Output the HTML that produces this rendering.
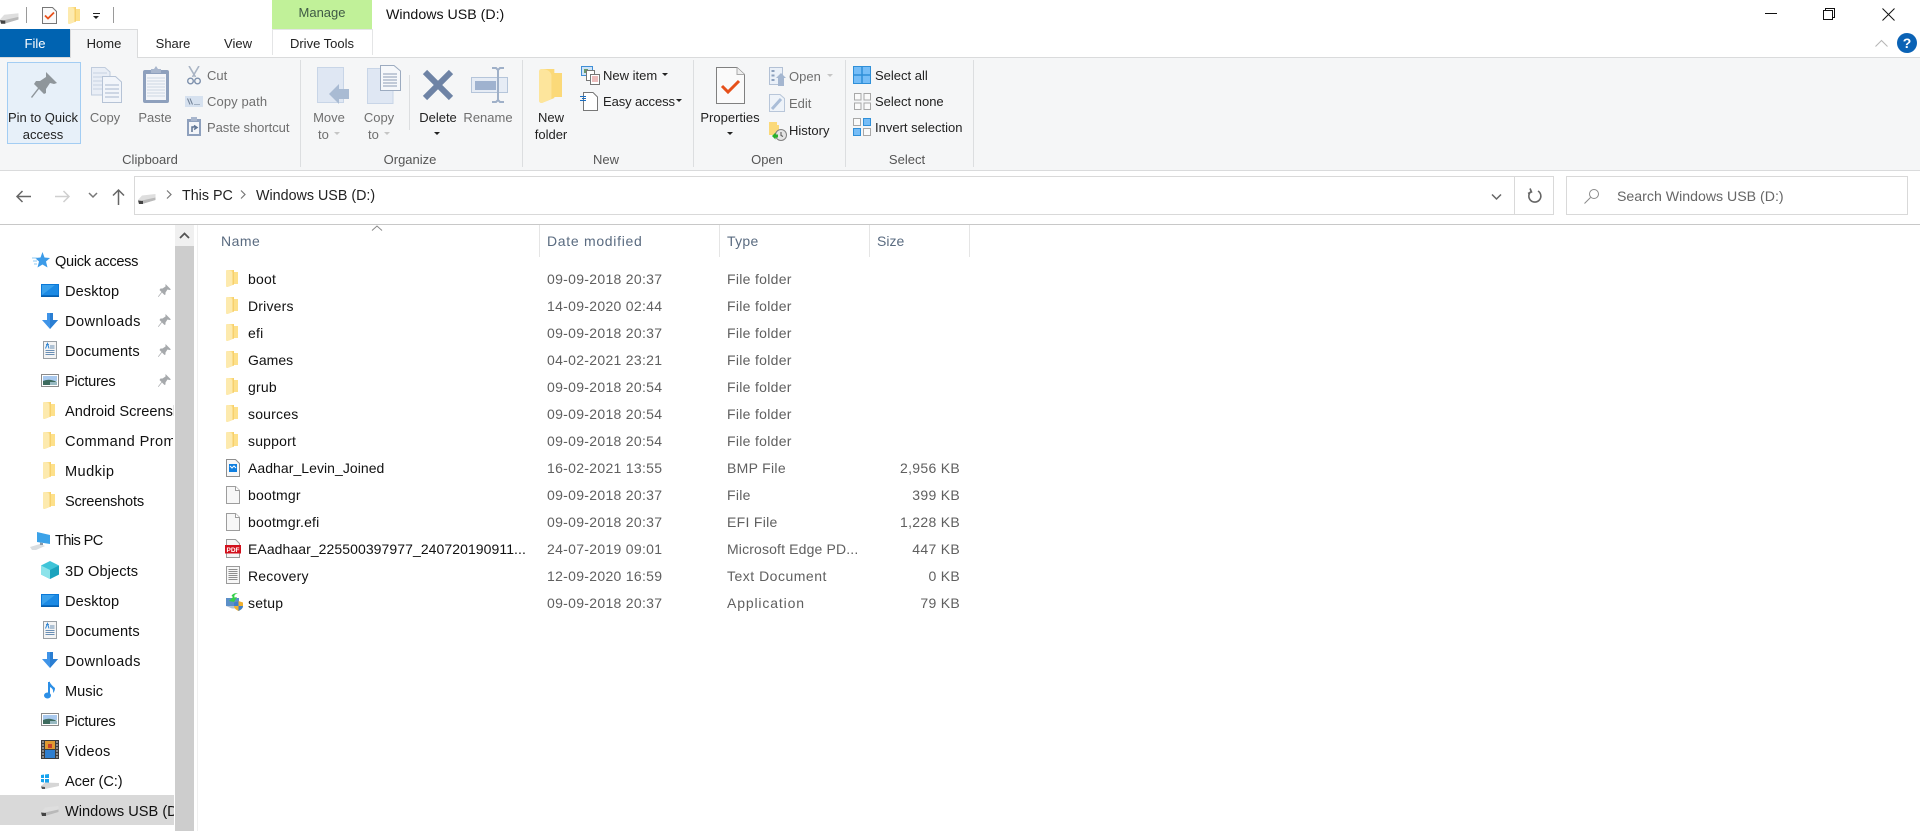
<!DOCTYPE html>
<html><head><meta charset="utf-8"><title>Windows USB (D:)</title>
<style>
html,body{margin:0;padding:0;background:#fff;}
#p{position:relative;width:1920px;height:831px;overflow:hidden;background:#fff;font-family:"Liberation Sans",sans-serif;color:#111;}
#p div,#p span,#p svg{position:absolute;}
.t{white-space:nowrap;line-height:20px;height:20px;}
.r{font-size:13px;color:#222;}
.g{font-size:13px;color:#6f6f6f;}
.c{transform:translateX(-50%);}
.l{font-size:13px;color:#555;}
.n{font-size:14.6px;color:#111;}
.f{font-size:14px;color:#111;}
.d{font-size:14px;letter-spacing:.3px;color:#5f5f5f;}
.s{transform:translateX(-100%);}
.h{font-size:14px;color:#5a6b80;}
.sep{width:1px;background:#dcdee0;}
</style></head><body><div id="p">
<svg width="0" height="0" style="left:0;top:0">
<defs>
<symbol id="folder" viewBox="0 0 12 17"><path d="M0 1.500Q0 0 1.500 0H8V2H12V14H8V14.500L1.500 17Q0 17 0 15.500Z" fill="#fde08a"/><path d="M0 1.500Q0 0 1.500 0C4 0 6 1 6.500 3V15L1.500 17Q0 17 0 15.500Z" fill="#fdeaae"/><path d="M6.500 0H8V14.500L6.500 15Z" fill="#f7d06c"/></symbol>
<symbol id="drive" viewBox="0 0 18 10"><path d="M0 6L4 1.500 17.500 0V6L4 10H1Z" fill="#dedede"/><path d="M4 6.500L17.500 3.500V6L4 10Z" fill="#b9b9b9"/><path d="M0 6.500L5 7V10H1Z" fill="#444"/></symbol>
<symbol id="pin" viewBox="0 0 13 13"><path d="M7.500 0L13 5.500 11.500 6 9.500 5.500 7.500 8.500V10.500L6.500 11 4 8.500 .5 13 0 12.500 3.500 8 1.500 6 2.500 4.500H4.500L7.500 2.500Z" fill="#a6a9ac"/></symbol>
<symbol id="doc" viewBox="0 0 14 18"><path d="M.5.5H9.500L13.500 4.500V17.500H.5Z" fill="#f7f7f7" stroke="#9d9d9d"/><path d="M9.500.5V4.500H13.500" fill="#fff" stroke="#9d9d9d"/></symbol>
<symbol id="desk" viewBox="0 0 18 13"><rect width="18" height="13" fill="#0b79d8"/><rect x="1" y="1" width="16" height="10" fill="#3aa1ec"/><path d="M1 11L14 1H17V11Z" fill="#1c8ae4"/><rect y="11.500" width="18" height="1.500" fill="#075fae"/></symbol>
<symbol id="dl" viewBox="0 0 16 16"><path d="M5 0H11V7H16L8 16 0 7H5Z" fill="#3f94e8"/><path d="M8 0H11V7H16L8 16Z" fill="#2a7ed2"/></symbol>
<symbol id="docs" viewBox="0 0 14 18"><path d="M.5.5H13.500V17.500H.5Z" fill="#f4f4f4" stroke="#9aa0a5"/><path d="M3 3.500H6M7 5H11.500M7 7H11.500M2.500 9.500H11.500M2.500 11.500H11.500M2.500 13.500H11.500" stroke="#6a8fb5" fill="none"/><path d="M2.500 7.500L4.500 2.500 6 7.500" stroke="#2a86d8" fill="none"/></symbol>
<symbol id="pics" viewBox="0 0 18 13"><rect x=".5" y=".5" width="17" height="12" fill="#fff" stroke="#8a8a8a"/><rect x="2" y="2" width="14" height="5" fill="#a9c9ee"/><path d="M2 7Q8 4 16 8V11H2Z" fill="#3d6b5e"/><rect x="9" y="8" width="7" height="3" fill="#98b9c2"/></symbol>
</defs></svg>

<!-- title bar -->
<svg style="left:0;top:13px" width="19" height="11"><use href="#drive"/></svg>
<div style="left:26px;top:7px;width:1px;height:16px;background:#9a9a9a"></div>
<svg style="left:42px;top:7px" width="15" height="17" viewBox="0 0 15 17"><path d="M.5.5H10.500L14.500 4.500V16.500H.5Z" fill="#fafafa" stroke="#777"/><path d="M3 8.500L6 11.500 12 5.500" fill="none" stroke="#e8501a" stroke-width="1.800"/></svg>
<svg style="left:68px;top:7px" width="12" height="17"><use href="#folder"/></svg>
<div style="left:93px;top:13px;width:7px;height:1px;background:#222"></div>
<div style="left:93px;top:16px;width:0;height:0;border-left:3.500px solid transparent;border-right:3.500px solid transparent;border-top:3px solid #222"></div>
<div style="left:113px;top:7px;width:1px;height:16px;background:#9a9a9a"></div>
<div style="left:272px;top:0;width:100px;height:29px;background:#c1f199"></div>
<span class="t r c" style="left:322px;top:3px;color:#3f5a45">Manage</span>
<span class="t" style="left:386px;top:5px;font-size:14.2px;color:#111">Windows USB (D:)</span>
<div style="left:1765px;top:13px;width:12px;height:1px;background:#111"></div>
<svg style="left:1823px;top:8px" width="12" height="12"><path d="M.5 2.500H9.500V11.500H.5ZM2.500 2.500V.5H11.500V9.500H9.500" fill="none" stroke="#111"/></svg>
<svg style="left:1882px;top:8px" width="13" height="13"><path d="M.5.5L12.500 12.500M12.500.5L.5 12.500" stroke="#111" fill="none"/></svg>

<!-- tabs -->
<div style="left:0;top:29px;width:70px;height:28px;background:#0063b1"></div>
<span class="t r c" style="left:35px;top:34px;color:#fff">File</span>
<div style="left:70px;top:29px;width:68px;height:29px;background:#f5f6f7;border:1px solid #dadbdc;border-bottom:0;box-sizing:border-box"></div>
<span class="t r c" style="left:104px;top:34px">Home</span>
<span class="t r c" style="left:173px;top:34px">Share</span>
<span class="t r c" style="left:238px;top:34px">View</span>
<div style="left:272px;top:29px;width:101px;height:26px;border:1px solid #e4e5e6;border-bottom:0;box-sizing:border-box"></div>
<span class="t r c" style="left:322px;top:34px">Drive Tools</span>
<svg style="left:1875px;top:39px" width="13" height="8"><path d="M.5 7.500L6.500 1.500 12.500 7.500" fill="none" stroke="#b5b5b5"/></svg>
<div style="left:1897px;top:33px;width:20px;height:20px;border-radius:50%;background:#0a62b5"></div>
<span class="t c" style="left:1907px;top:33px;color:#fff;font-size:14px;font-weight:bold">?</span>

<!-- ribbon -->
<div style="left:0;top:57px;width:1920px;height:114px;background:#f5f6f7;border-top:1px solid #dadbdc;border-bottom:1px solid #dadbdc;box-sizing:border-box"></div>
<div style="left:71px;top:56px;width:66px;height:3px;background:#f5f6f7"></div>
<div class="sep" style="left:300px;top:60px;height:107px"></div>
<div class="sep" style="left:409px;top:75px;height:55px"></div>
<div class="sep" style="left:522px;top:60px;height:107px"></div>
<div class="sep" style="left:693px;top:60px;height:107px"></div>
<div class="sep" style="left:845px;top:60px;height:107px"></div>
<div class="sep" style="left:973px;top:60px;height:107px"></div>

<div style="left:7px;top:62px;width:74px;height:82px;background:#e7f0f9;border:1px solid #a3cdf3;box-sizing:border-box"></div>
<svg style="left:31px;top:72px" width="26" height="26" viewBox="0 0 13 13"><path d="M7.500 0L13 5.500 11.500 6 9.500 5.500 7.500 8.500V10.500L6.500 11 4 8.500 .5 13 0 12.500 3.500 8 1.500 6 2.500 4.500H4.500L7.500 2.500Z" fill="#8f969b"/></svg>
<span class="t r c" style="left:43px;top:108px">Pin to Quick</span>
<span class="t r c" style="left:43px;top:125px">access</span>

<svg style="left:91px;top:67px" width="31" height="36" viewBox="0 0 31 36"><path d="M.5.5H14L19 5V28H.5Z" fill="#e9eef6" stroke="#c0ccdd"/><path d="M2 6H16M2 10H16M2 14H16M2 18H16M2 22H16" stroke="#c6d2e3"/><path d="M11.500 9.500H24.500L30.500 15V35.500H11.500Z" fill="#f2f5fa" stroke="#b6c3d6"/><path d="M14 18H28M14 22H28M14 26H28M14 30H28" stroke="#a8b8ce"/></svg>
<span class="t g c" style="left:105px;top:108px">Copy</span>
<svg style="left:143px;top:66px" width="27" height="37" viewBox="0 0 27 37"><rect x="0" y="4" width="26" height="33" rx="2" fill="#8ea0bd"/><rect x="3" y="8" width="20" height="26" fill="#f3f5f9"/><path d="M4 12H22M4 15H22M4 18H22M4 21H22M4 24H22M4 27H22M4 30H22" stroke="#cdd6e4"/><path d="M8 7V3H11L13 0 15 3H18V7Z" fill="#a8b6cd"/></svg>
<span class="t g c" style="left:155px;top:108px">Paste</span>
<svg style="left:187px;top:66px" width="14" height="19" viewBox="0 0 14 19"><path d="M2 0L8.500 11M12 0L5.500 11" stroke="#a9b4c4" stroke-width="1.600" fill="none"/><circle cx="3.500" cy="15" r="2.800" fill="none" stroke="#7e91ad" stroke-width="1.400"/><circle cx="10.500" cy="15" r="2.800" fill="none" stroke="#7e91ad" stroke-width="1.400"/></svg>
<span class="t g" style="left:207px;top:66px">Cut</span>
<svg style="left:185px;top:96px" width="18" height="11" viewBox="0 0 18 11"><rect width="18" height="11" fill="#d6e1ef"/><path d="M2.500 2.500L5 8.500M5 2.500L7.500 8.500" stroke="#6f7f95" fill="none"/><path d="M9.500 8.500H15.500" stroke="#6f7f95" stroke-dasharray="1 1"/></svg>
<span class="t g" style="left:207px;top:92px;letter-spacing:.1px">Copy path</span>
<svg style="left:187px;top:117px" width="14" height="19" viewBox="0 0 14 19"><rect y="2" width="14" height="17" fill="#8ea0bd"/><rect x="2" y="5" width="10" height="12" fill="#f3f5f9"/><path d="M4 0H10V4H4Z" fill="#a8b6cd"/><path d="M5 15V10H9M7 8.500L10 10.500 7 12.500" stroke="#5d7393" fill="none" stroke-width="1.500"/></svg>
<span class="t g" style="left:207px;top:118px;letter-spacing:-.05px">Paste shortcut</span>
<span class="t l c" style="left:150px;top:150px">Clipboard</span>

<svg style="left:317px;top:67px" width="33" height="37" viewBox="0 0 33 37"><rect x=".5" y=".5" width="26" height="35" fill="#dfe7f3" stroke="#c8d5e7"/><path d="M12 27L22 17V22H32V32H22V37Z" fill="#a9bbd3"/></svg>
<span class="t g c" style="left:329px;top:108px">Move</span>
<span class="t g" style="left:318px;top:125px">to</span>
<div style="left:334px;top:132px;width:0;height:0;border-left:3.500px solid transparent;border-right:3.500px solid transparent;border-top:3.500px solid #c5c5c5"></div>
<svg style="left:367px;top:65px" width="34" height="39" viewBox="0 0 34 39"><path d="M.5 3.500H26V38.500H.5Z" fill="#dfe7f3" stroke="#c8d5e7"/><path d="M13.500.5H27L33.500 6V25.500H13.500Z" fill="#f6f8fb" stroke="#9cabc0"/><path d="M16 9H30M16 12H30M16 15H30M16 18H30M16 21H30" stroke="#8c9db5"/></svg>
<span class="t g c" style="left:379px;top:108px">Copy</span>
<span class="t g" style="left:368px;top:125px">to</span>
<div style="left:384px;top:132px;width:0;height:0;border-left:3.500px solid transparent;border-right:3.500px solid transparent;border-top:3.500px solid #c5c5c5"></div>
<svg style="left:422px;top:69px" width="32" height="32" viewBox="0 0 32 32"><path d="M3 3L29 29M29 3L3 29" stroke="#6e83a5" stroke-width="6" fill="none"/></svg>
<span class="t r c" style="left:438px;top:108px">Delete</span>
<div style="left:434px;top:132px;width:0;height:0;border-left:3.500px solid transparent;border-right:3.500px solid transparent;border-top:3.500px solid #222"></div>
<svg style="left:471px;top:67px" width="37" height="37" viewBox="0 0 37 37"><rect x=".5" y="10.500" width="36" height="15" fill="#e6ecf5" stroke="#b5c5da"/><rect x="4" y="14" width="21" height="9" fill="#9fb2cf"/><path d="M21 1H25L27 3 29 1H33M27 3V33M21 35H25L27 33 29 35H33" stroke="#9fb0c8" stroke-width="2" fill="none"/></svg>
<span class="t g c" style="left:488px;top:108px">Rename</span>
<span class="t l c" style="left:410px;top:150px">Organize</span>

<svg style="left:539px;top:69px" width="23" height="34" viewBox="0 0 12 17" preserveAspectRatio="none"><path d="M0 1.500Q0 0 1.500 0H8V2H12V14H8V14.500L1.500 17Q0 17 0 15.500Z" fill="#fbd979"/><path d="M0 1.500Q0 0 1.500 0C4 0 6 1 6.500 3V15L1.500 17Q0 17 0 15.500Z" fill="#fde59c"/></svg>
<span class="t r c" style="left:551px;top:108px">New</span>
<span class="t r c" style="left:551px;top:125px">folder</span>
<svg style="left:581px;top:66px" width="19" height="19" viewBox="0 0 19 19"><rect x=".5" y=".5" width="11" height="9" fill="#cfe4f7" stroke="#3f8ed6"/><rect x="3" y="3" width="4" height="4" fill="#6a9a6a"/><rect x="5.500" y="4.500" width="8" height="10" fill="#fff" stroke="#777"/><rect x="9.500" y="8.500" width="9" height="10" fill="#fff" stroke="#777"/><path d="M11 11H17M11 13H17M11 15H17" stroke="#d97a7a"/></svg>
<span class="t r" style="left:603px;top:66px">New item</span>
<div style="left:662px;top:73px;width:0;height:0;border-left:3.500px solid transparent;border-right:3.500px solid transparent;border-top:3.500px solid #222"></div>
<svg style="left:580px;top:92px" width="18" height="19" viewBox="0 0 18 19"><path d="M3.500.5H13L17.500 5V18.500H3.500Z" fill="#fff" stroke="#777"/><path d="M0 4.500H6M2 6.500H6M0 8.500H6" stroke="#1b6ec2"/></svg>
<span class="t r" style="left:603px;top:92px;letter-spacing:-.1px">Easy access</span>
<div style="left:676px;top:99px;width:0;height:0;border-left:3.500px solid transparent;border-right:3.500px solid transparent;border-top:3.500px solid #222"></div>
<span class="t l c" style="left:606px;top:150px">New</span>

<svg style="left:716px;top:67px" width="29" height="37" viewBox="0 0 29 37"><path d="M.5.5H21L28.500 7.500V36.500H.5Z" fill="#fafafa" stroke="#808080"/><path d="M21 .5V7.500H28.500" fill="#eee" stroke="#aaa"/><path d="M6 19L12 25 23 14" fill="none" stroke="#e6501a" stroke-width="3"/></svg>
<span class="t r c" style="left:730px;top:108px">Properties</span>
<div style="left:727px;top:132px;width:0;height:0;border-left:3.500px solid transparent;border-right:3.500px solid transparent;border-top:3.500px solid #222"></div>
<svg style="left:769px;top:67px" width="18" height="19" viewBox="0 0 18 19"><rect x=".5" y=".5" width="13" height="17" fill="#eaf0f8" stroke="#b3c1d5"/><path d="M2.500 3h3v2h-3zM2.500 7.500h3v2h-3zM2.500 12h3v2h-3z" fill="#8ca0bd"/><path d="M7 11L12 6 17 11H15V19H9V11Z" fill="#a4b6d0"/></svg>
<span class="t g" style="left:789px;top:67px">Open</span>
<div style="left:827px;top:74px;width:0;height:0;border-left:3.500px solid transparent;border-right:3.500px solid transparent;border-top:3.500px solid #c5c5c5"></div>
<svg style="left:769px;top:94px" width="16" height="18" viewBox="0 0 16 18"><path d="M.5.5H11L15.500 4.500V17.500H.5Z" fill="#eef3f9" stroke="#b8c6d9"/><path d="M3 15L12 5" stroke="#a9bdd8" stroke-width="3"/></svg>
<span class="t g" style="left:789px;top:94px">Edit</span>
<svg style="left:769px;top:121px" width="18" height="20" viewBox="0 0 18 20"><path d="M0 1H8V4H10V14H0Z" fill="#fbd979"/><circle cx="12" cy="14" r="5.500" fill="#e4e4e4" stroke="#808080"/><path d="M12 11V14.500L14 15.500" stroke="#555" fill="none"/><path d="M3 15L6.500 11.500V13.500H9V16.500H6.500V18.500Z" fill="#26b02b"/></svg>
<span class="t r" style="left:789px;top:121px">History</span>
<span class="t l c" style="left:767px;top:150px">Open</span>

<svg style="left:853px;top:66px" width="18" height="18" viewBox="0 0 18 18"><rect x=".5" y=".5" width="17" height="17" fill="#76bdf7" stroke="#2f8fd8"/><path d="M9 0V18M0 9H18" stroke="#2f8fd8" stroke-width="1.500"/></svg>
<span class="t r" style="left:875px;top:66px">Select all</span>
<svg style="left:854px;top:93px" width="17" height="17" viewBox="0 0 17 17"><path d="M.5.5h6.500v6.500H.5zM10 .5h6.500v6.500H10zM.5 10h6.500v6.500H.5zM10 10h6.500v6.500H10z" fill="#fafafa" stroke="#a8a8a8"/></svg>
<span class="t r" style="left:875px;top:92px">Select none</span>
<svg style="left:853px;top:118px" width="18" height="18" viewBox="0 0 18 18"><path d="M.5.5h7v7h-7zM10.500 10.500h7v7h-7z" fill="#fafafa" stroke="#a8a8a8"/><path d="M10.500.5h7v7h-7zM.5 10.500h7v7h-7z" fill="#76bdf7" stroke="#2f8fd8"/></svg>
<span class="t r" style="left:875px;top:118px">Invert selection</span>
<span class="t l c" style="left:907px;top:150px">Select</span>

<!-- address -->
<svg style="left:15px;top:189px" width="17" height="15" viewBox="0 0 17 15"><path d="M16 7.500H2M7.500 2L2 7.500 7.500 13" fill="none" stroke="#666" stroke-width="1.500"/></svg>
<svg style="left:54px;top:189px" width="17" height="15" viewBox="0 0 17 15"><path d="M1 7.500H15M9.500 2L15 7.500 9.500 13" fill="none" stroke="#cfcfcf" stroke-width="1.500"/></svg>
<svg style="left:88px;top:192px" width="10" height="7"><path d="M1 1L5 5 9 1" fill="none" stroke="#777" stroke-width="1.500"/></svg>
<svg style="left:111px;top:188px" width="15" height="17" viewBox="0 0 15 17"><path d="M7.500 17V2M2 7.500L7.500 2 13 7.500" fill="none" stroke="#666" stroke-width="1.500"/></svg>
<div style="left:134px;top:176px;width:1420px;height:39px;border:1px solid #d9d9d9;box-sizing:border-box;background:#fff"></div>
<div style="left:1514px;top:176px;width:1px;height:39px;background:#d9d9d9"></div>
<svg style="left:138px;top:194px" width="18" height="10"><use href="#drive"/></svg>
<svg style="left:166px;top:189px" width="7" height="11"><path d="M1 1.500L5 5.500 1 9.500" fill="none" stroke="#777" stroke-width="1.200"/></svg>
<span class="t" style="left:182px;top:186px;font-size:14.300px;color:#222">This PC</span>
<svg style="left:240px;top:189px" width="7" height="11"><path d="M1 1.500L5 5.500 1 9.500" fill="none" stroke="#777" stroke-width="1.200"/></svg>
<span class="t" style="left:256px;top:186px;font-size:14.300px;color:#222">Windows USB (D:)</span>
<svg style="left:1491px;top:193px" width="11" height="8"><path d="M1 1.500L5.500 6 10 1.500" fill="none" stroke="#666" stroke-width="1.500"/></svg>
<svg style="left:1527px;top:188px" width="16" height="16" viewBox="0 0 16 16"><path d="M4 3.500A6 6 0 1 0 11 3M3 .5L4.500 4 1 5.500" fill="none" stroke="#666" stroke-width="1.600"/></svg>
<div style="left:1566px;top:176px;width:342px;height:39px;border:1px solid #d9d9d9;box-sizing:border-box"></div>
<svg style="left:1584px;top:188px" width="16" height="16" viewBox="0 0 16 16"><circle cx="10" cy="6" r="4.500" fill="none" stroke="#8a8a8a"/><path d="M6.500 9.500L.5 15.500" stroke="#8a8a8a"/></svg>
<span class="t" style="left:1617px;top:186px;font-size:14.150px;color:#666">Search Windows USB (D:)</span>
<div style="left:0;top:224px;width:1920px;height:1px;background:#c8c8c8"></div>

<!-- nav pane -->
<div style="left:175px;top:225px;width:19px;height:606px;background:#cdcdcd"></div>
<div style="left:175px;top:225px;width:19px;height:21px;background:#f0f0f0"></div>
<svg style="left:179px;top:232px" width="11" height="7"><path d="M1 6L5.500 1.500 10 6" fill="none" stroke="#555" stroke-width="1.800"/></svg>
<div style="left:197px;top:225px;width:1px;height:606px;background:#f0f0f0"></div>
<div style="left:0;top:795px;width:174px;height:30px;background:#d9d9d9"></div>

<svg style="left:32px;top:252px" width="18" height="17" viewBox="0 0 18 17"><path d="M10.500 0L12.500 5.500 18 6 14 9.500 15.500 15.500 10.500 12.500 5.500 15.500 7 9.500 3 6 8.500 5.500Z" fill="#3c9be8"/><path d="M0 6H5M1 9H5M2 12H5" stroke="#8ccaf3"/></svg>
<span class="t n" style="left:55px;top:252px;letter-spacing:-.3px">Quick access</span>

<svg style="left:41px;top:284px" width="18" height="13"><use href="#desk"/></svg><span class="t n" style="left:65px;top:282px;letter-spacing:.1px">Desktop</span>
<svg style="left:158px;top:284px" width="13" height="13"><use href="#pin"/></svg>
<svg style="left:42px;top:313px" width="16" height="16"><use href="#dl"/></svg><span class="t n" style="left:65px;top:312px;letter-spacing:.4px">Downloads</span>
<svg style="left:158px;top:314px" width="13" height="13"><use href="#pin"/></svg>
<svg style="left:43px;top:341px" width="14" height="18"><use href="#docs"/></svg><span class="t n" style="left:65px;top:342px;letter-spacing:.1px">Documents</span>
<svg style="left:158px;top:344px" width="13" height="13"><use href="#pin"/></svg>
<svg style="left:41px;top:374px" width="18" height="13"><use href="#pics"/></svg><span class="t n" style="left:65px;top:372px;letter-spacing:-.3px">Pictures</span>
<svg style="left:158px;top:374px" width="13" height="13"><use href="#pin"/></svg>
<svg style="left:43px;top:402px" width="12" height="17"><use href="#folder"/></svg>
<div style="left:65px;top:402px;width:109px;height:20px;overflow:hidden"><span class="t n" style="left:0;top:0">Android Screenshots</span></div>
<svg style="left:43px;top:432px" width="12" height="17"><use href="#folder"/></svg>
<div style="left:65px;top:432px;width:108px;height:20px;overflow:hidden"><span class="t n" style="left:0;top:0;letter-spacing:.4px">Command Prompt</span></div>
<svg style="left:43px;top:462px" width="12" height="17"><use href="#folder"/></svg><span class="t n" style="left:65px;top:462px;letter-spacing:.4px">Mudkip</span>
<svg style="left:43px;top:492px" width="12" height="17"><use href="#folder"/></svg><span class="t n" style="left:65px;top:492px;letter-spacing:-.2px">Screenshots</span>

<svg style="left:30px;top:532px" width="21" height="19" viewBox="0 0 21 19"><path d="M7 0L20 3V12L7 10Z" fill="#3ba2e8"/><path d="M0 15L10 12 15 14 6 18H2Z" fill="#d9dde0"/><path d="M10 10.500L13 11V13H10Z" fill="#8a9aa8"/></svg>
<span class="t n" style="left:55px;top:531px;letter-spacing:-.6px">This PC</span>
<svg style="left:41px;top:561px" width="18" height="18" viewBox="0 0 18 18"><path d="M9 0L18 4.500V13.500L9 18 0 13.500V4.500Z" fill="#3fc4d8"/><path d="M0 4.500L9 9V18L0 13.500Z" fill="#8ce3ea"/><path d="M18 4.500L9 9V18L18 13.500Z" fill="#1ba3bd"/></svg>
<span class="t n" style="left:65px;top:562px;letter-spacing:.1px">3D Objects</span>
<svg style="left:41px;top:594px" width="18" height="13"><use href="#desk"/></svg><span class="t n" style="left:65px;top:592px;letter-spacing:.1px">Desktop</span>
<svg style="left:43px;top:621px" width="14" height="18"><use href="#docs"/></svg><span class="t n" style="left:65px;top:622px;letter-spacing:.1px">Documents</span>
<svg style="left:42px;top:652px" width="16" height="16"><use href="#dl"/></svg><span class="t n" style="left:65px;top:652px;letter-spacing:.4px">Downloads</span>
<svg style="left:44px;top:681px" width="12" height="18" viewBox="0 0 12 18"><path d="M5 1V14" stroke="#2c8fe6" stroke-width="2"/><ellipse cx="3.500" cy="14.500" rx="3.500" ry="3" fill="#2c8fe6"/><path d="M5 0Q7 4 11 7 11 10 9 12 10 8 6 6Z" fill="#2c8fe6"/></svg>
<span class="t n" style="left:65px;top:682px">Music</span>
<svg style="left:41px;top:713px" width="18" height="13"><use href="#pics"/></svg><span class="t n" style="left:65px;top:712px;letter-spacing:-.3px">Pictures</span>
<svg style="left:41px;top:740px" width="18" height="19" viewBox="0 0 18 19"><rect width="18" height="19" fill="#3c3c3c"/><path d="M1 2h2M1 5h2M1 8h2M1 11h2M1 14h2M1 17h2M15 2h2M15 5h2M15 8h2M15 11h2M15 14h2M15 17h2" stroke="#ddd"/><rect x="4" y="1" width="10" height="8" fill="#e09a30"/><rect x="4" y="10" width="10" height="8" fill="#2f7fd0"/><rect x="7" y="4" width="4" height="4" fill="#c8402a"/></svg>
<span class="t n" style="left:65px;top:742px;letter-spacing:.2px">Videos</span>
<svg style="left:40px;top:774px" width="20" height="15" viewBox="0 0 20 15"><path d="M1 1L4 .5V4H1ZM5 .5L9 0V4H5ZM1 5H4V8.500L1 8ZM5 5H9V9L5 8.500Z" fill="#17a3ee"/><path d="M1 12L5 8.500 19 9V12L5 15H2Z" fill="#d6d6d6"/><path d="M1 12.500L5 13V15H2Z" fill="#555"/></svg>
<span class="t n" style="left:65px;top:772px;letter-spacing:-.1px">Acer (C:)</span>
<svg style="left:41px;top:806px" width="18" height="10"><use href="#drive"/></svg>
<div style="left:65px;top:802px;width:109px;height:20px;overflow:hidden"><span class="t n" style="left:0;top:0">Windows USB (D:)</span></div>

<!-- header -->
<svg style="left:371px;top:225px" width="12" height="6"><path d="M1 5.500L6 1 11 5.500" fill="none" stroke="#888"/></svg>
<span class="t h" style="left:221px;top:231px;letter-spacing:.5px">Name</span>
<span class="t h" style="left:547px;top:231px;letter-spacing:.7px">Date modified</span>
<span class="t h" style="left:727px;top:231px;letter-spacing:.3px">Type</span>
<span class="t h" style="left:877px;top:231px">Size</span>
<div class="sep" style="left:539px;top:225px;height:32px;background:#e5e5e5"></div>
<div class="sep" style="left:719px;top:225px;height:32px;background:#e5e5e5"></div>
<div class="sep" style="left:869px;top:225px;height:32px;background:#e5e5e5"></div>
<div class="sep" style="left:969px;top:225px;height:32px;background:#e5e5e5"></div>

<!-- files -->
<svg style="left:226px;top:270px" width="12" height="17"><use href="#folder"/></svg><span class="t f" style="left:248px;top:269px;letter-spacing:.2px">boot</span><span class="t d" style="left:547px;top:269px">09-09-2018 20:37</span><span class="t d" style="left:727px;top:269px">File folder</span>
<svg style="left:226px;top:297px" width="12" height="17"><use href="#folder"/></svg><span class="t f" style="left:248px;top:296px;letter-spacing:.2px">Drivers</span><span class="t d" style="left:547px;top:296px">14-09-2020 02:44</span><span class="t d" style="left:727px;top:296px">File folder</span>
<svg style="left:226px;top:324px" width="12" height="17"><use href="#folder"/></svg><span class="t f" style="left:248px;top:323px;letter-spacing:.2px">efi</span><span class="t d" style="left:547px;top:323px">09-09-2018 20:37</span><span class="t d" style="left:727px;top:323px">File folder</span>
<svg style="left:226px;top:351px" width="12" height="17"><use href="#folder"/></svg><span class="t f" style="left:248px;top:350px">Games</span><span class="t d" style="left:547px;top:350px">04-02-2021 23:21</span><span class="t d" style="left:727px;top:350px">File folder</span>
<svg style="left:226px;top:378px" width="12" height="17"><use href="#folder"/></svg><span class="t f" style="left:248px;top:377px;letter-spacing:.2px">grub</span><span class="t d" style="left:547px;top:377px">09-09-2018 20:54</span><span class="t d" style="left:727px;top:377px">File folder</span>
<svg style="left:226px;top:405px" width="12" height="17"><use href="#folder"/></svg><span class="t f" style="left:248px;top:404px;letter-spacing:.2px">sources</span><span class="t d" style="left:547px;top:404px">09-09-2018 20:54</span><span class="t d" style="left:727px;top:404px">File folder</span>
<svg style="left:226px;top:432px" width="12" height="17"><use href="#folder"/></svg><span class="t f" style="left:248px;top:431px;letter-spacing:.2px">support</span><span class="t d" style="left:547px;top:431px">09-09-2018 20:54</span><span class="t d" style="left:727px;top:431px">File folder</span>

<svg style="left:226px;top:459px" width="14" height="18" viewBox="0 0 14 18"><path d="M.5.5H9.500L13.500 4.500V17.500H.5Z" fill="#f7f7f7" stroke="#8e8e8e"/><rect x="3" y="5" width="8" height="8" fill="#0f7fe0"/><path d="M4 7L6 9 8 7 10 9" stroke="#fff" fill="none"/></svg>
<span class="t f" style="left:248px;top:458px;letter-spacing:.05px">Aadhar_Levin_Joined</span><span class="t d" style="left:547px;top:458px">16-02-2021 13:55</span><span class="t d" style="left:727px;top:458px">BMP File</span><span class="t d s" style="left:960px;top:458px">2,956 KB</span>
<svg style="left:226px;top:486px" width="14" height="18"><use href="#doc"/></svg>
<span class="t f" style="left:248px;top:485px;letter-spacing:.2px">bootmgr</span><span class="t d" style="left:547px;top:485px">09-09-2018 20:37</span><span class="t d" style="left:727px;top:485px">File</span><span class="t d s" style="left:960px;top:485px">399 KB</span>
<svg style="left:226px;top:513px" width="14" height="18"><use href="#doc"/></svg>
<span class="t f" style="left:248px;top:512px;letter-spacing:.2px">bootmgr.efi</span><span class="t d" style="left:547px;top:512px">09-09-2018 20:37</span><span class="t d" style="left:727px;top:512px">EFI File</span><span class="t d s" style="left:960px;top:512px">1,228 KB</span>
<svg style="left:225px;top:539px" width="16" height="19" viewBox="0 0 16 19"><path d="M1.500.5H10.500L14.500 4.500V18.500H1.500Z" fill="#f5f5f5" stroke="#9a9a9a"/><rect y="6" width="16" height="8.500" fill="#d2101c"/><text x="8" y="13" font-size="6.500" font-weight="bold" fill="#fff" text-anchor="middle" font-family="Liberation Sans">PDF</text></svg>
<span class="t f" style="left:248px;top:539px;letter-spacing:.07px">EAadhaar_225500397977_240720190911...</span><span class="t d" style="left:547px;top:539px">24-07-2019 09:01</span><span class="t d" style="left:727px;top:539px;letter-spacing:.15px">Microsoft Edge PD...</span><span class="t d s" style="left:960px;top:539px">447 KB</span>
<svg style="left:226px;top:566px" width="14" height="18" viewBox="0 0 14 18"><path d="M.5.5H13.500V17.500H.5Z" fill="#f7f7f7" stroke="#9a9a9a"/><path d="M2.500 3.500H11.500M2.500 5.500H11.500M2.500 7.500H11.500M2.500 9.500H11.500M2.500 11.500H11.500M2.500 13.500H11.500" stroke="#8e8e8e"/></svg>
<span class="t f" style="left:248px;top:566px;letter-spacing:.2px">Recovery</span><span class="t d" style="left:547px;top:566px">12-09-2020 16:59</span><span class="t d" style="left:727px;top:566px;letter-spacing:.5px">Text Document</span><span class="t d s" style="left:960px;top:566px">0 KB</span>
<svg style="left:225px;top:593px" width="18" height="18" viewBox="0 0 18 18"><path d="M1 5H14V13H1Z" fill="#5b8fc8"/><path d="M1 13L7 15.500H11L9 13Z" fill="#b4c4d8"/><path d="M4 8L8 4 6.500 3C8 0 11 0 13 .5 10 1 9 2 9.500 4.500L12 4 9 9Z" fill="#34d04a"/><path d="M9 9.500L13.500 8 18 9.500V13C18 15.500 15.500 17 13.500 18 11.500 17 9 15.500 9 13Z" fill="#f0b030"/><path d="M9 9.500L13.500 8V13H9ZM13.500 13H18C18 15.500 15.500 17 13.500 18Z" fill="#3f7fc9"/></svg>
<span class="t f" style="left:248px;top:593px;letter-spacing:.2px">setup</span><span class="t d" style="left:547px;top:593px">09-09-2018 20:37</span><span class="t d" style="left:727px;top:593px;letter-spacing:.85px">Application</span><span class="t d s" style="left:960px;top:593px">79 KB</span>
</div></body></html>
